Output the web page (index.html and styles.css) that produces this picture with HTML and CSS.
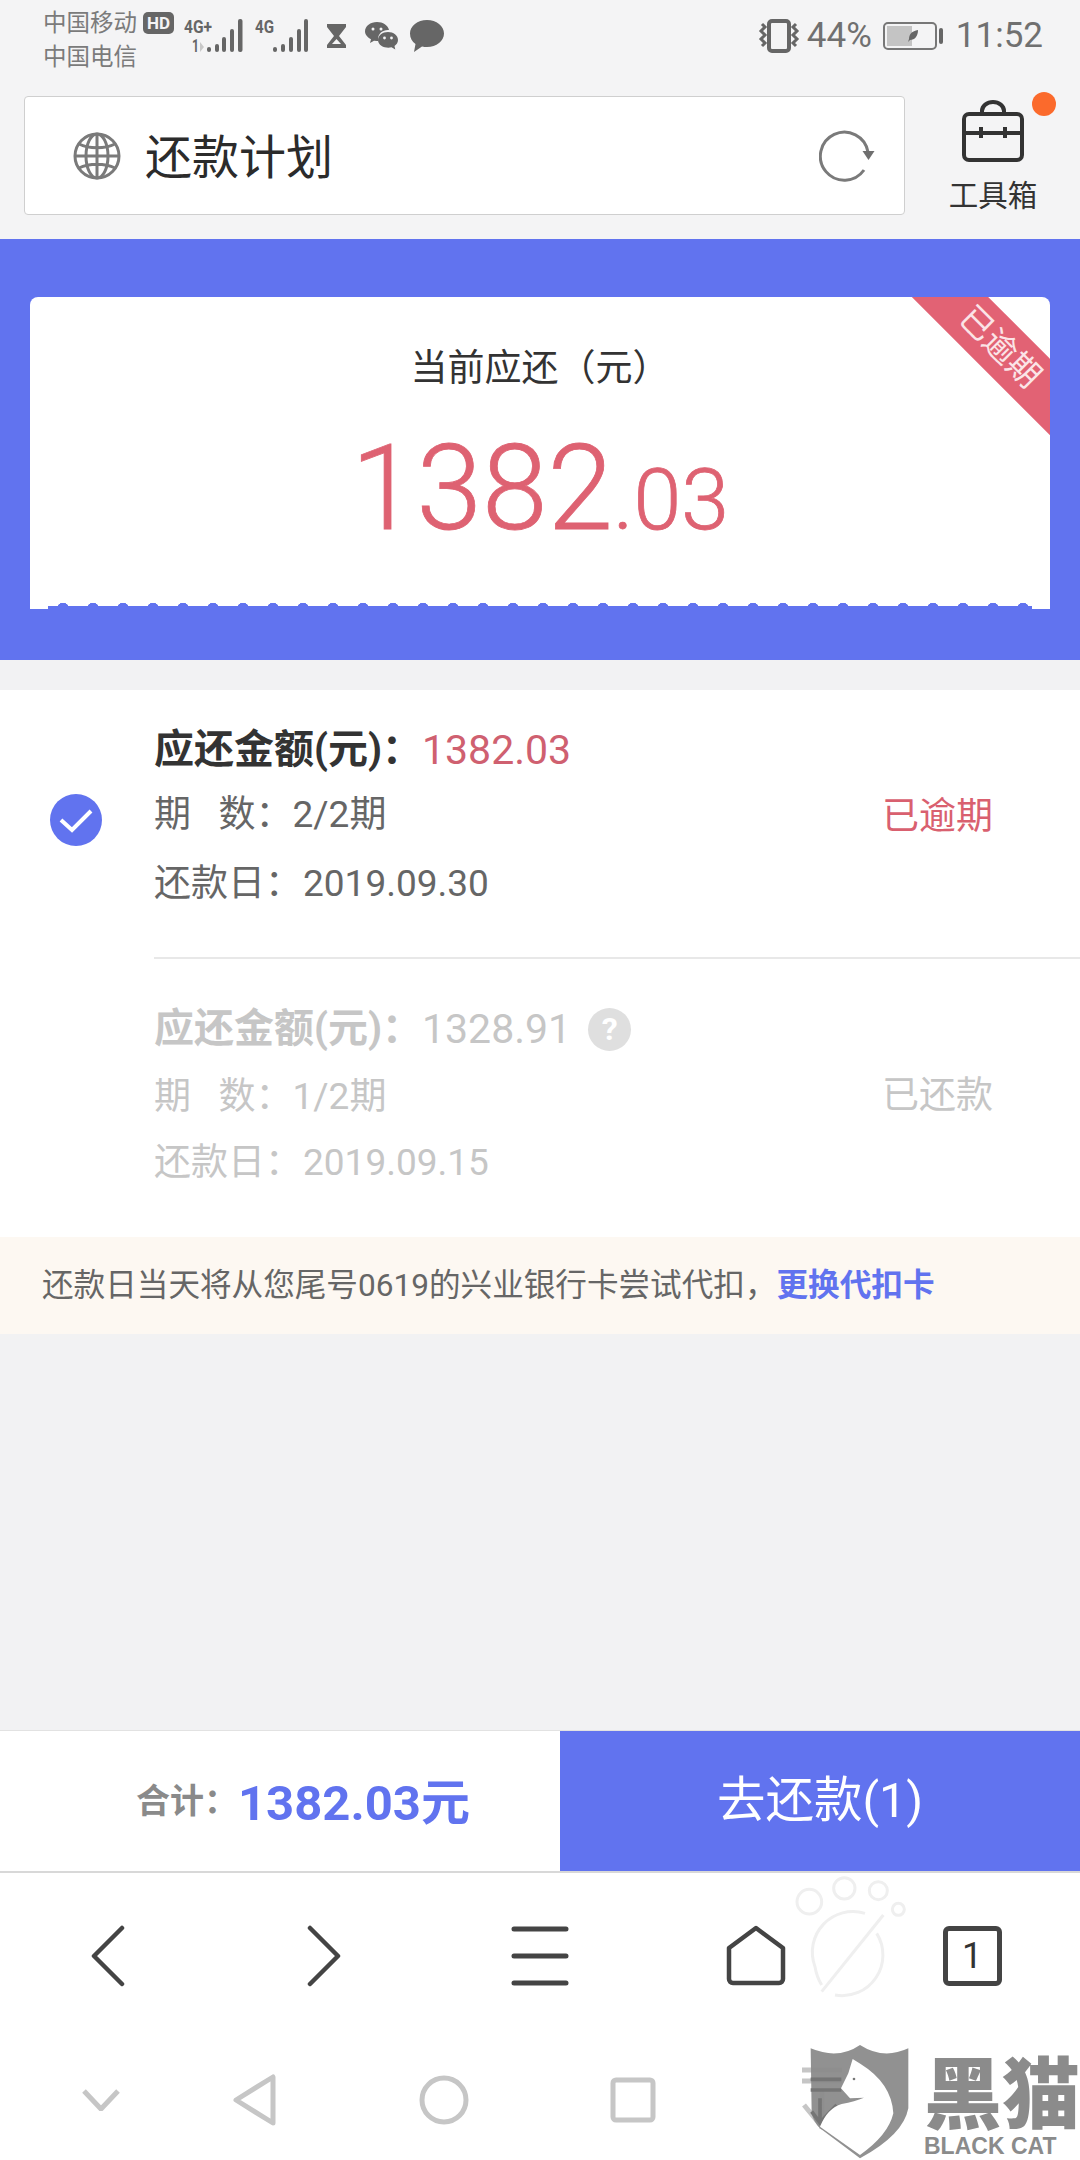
FILE: index.html
```html
<!DOCTYPE html>
<html lang="zh-CN">
<head>
<meta charset="utf-8">
<title>还款计划</title>
<link rel="stylesheet" href="styles.css">
</head>
<body>
<div class="page">
  <header class="status">
    <div class="carrier">
      <div class="carrier-line">中国移动<span class="hd">HD</span></div>
      <div class="carrier-line">中国电信</div>
    </div>
    <svg class="sig1" width="59" height="44" viewBox="0 -4 59 44">
      <text class="net" x="0" y="15" textLength="28" lengthAdjust="spacingAndGlyphs">4G+</text>
      <text class="net" x="8" y="34" textLength="7" lengthAdjust="spacingAndGlyphs">1</text>
      <path class="arrow" d="M16 24l4 5-4 5z"/>
      <g class="bar"><rect x="23" y="29" width="4" height="5" rx="2"/><rect x="31" y="26" width="4" height="8" rx="2"/><rect x="38" y="19" width="4" height="15" rx="2"/><rect x="46" y="11" width="4" height="23" rx="2"/><rect x="54" y="1" width="4.500" height="33" rx="2"/></g>
    </svg>
    <svg class="sig2" width="53" height="44" viewBox="0 -4 53 44">
      <text class="net" x="0" y="15" textLength="19" lengthAdjust="spacingAndGlyphs">4G</text>
      <g class="bar"><rect x="18" y="29" width="4" height="5" rx="2"/><rect x="26" y="26" width="4" height="8" rx="2"/><rect x="34" y="19" width="4" height="15" rx="2"/><rect x="42" y="11" width="4" height="23" rx="2"/><rect x="49" y="1" width="4" height="33" rx="2"/></g>
    </svg>
    <svg class="hourglass" width="19" height="24" viewBox="0 0 19 24">
      <path class="glyph" d="M0 0h19v3l-7 9 7 9v3H0v-3l7-9-7-9z"/><path class="cut" d="M5 20l4.500-5 4.500 5z"/>
    </svg>
    <svg class="wechat" width="33" height="28" viewBox="0 0 33 28">
      <path class="glyph" d="M12 0c6 0 11 3.500 12 8-6-.5-11 3.500-11 9l.2 2H12l-3-.3-4 2.300 1-3.700C2.500 15.500 0 12.500 0 9.500 0 4 5.500 0 12 0z"/>
      <circle class="cut" cx="8" cy="7" r="1.500"/><circle class="cut" cx="16" cy="7" r="1.500"/>
      <path class="glyph" d="M23 10c5.500 0 10 3.500 10 8 0 2.500-1.500 4.700-3.500 6l.8 3.500-3.800-2.200c-5 1.500-13.500-1-13.500-7.300 0-4.500 4.500-8 10-8z"/>
      <circle class="cut" cx="19.500" cy="16" r="1.400"/><circle class="cut" cx="26.500" cy="16" r="1.400"/>
    </svg>
    <svg class="msg" width="34" height="32" viewBox="0 0 34 32">
      <path class="glyph" d="M17 0c9.500 0 17 6 17 13.500S26.500 27 17 27c-2 0-3 0-5-.5L4 32l1.500-8C2 21.500 0 18 0 13.500 0 6 7.500 0 17 0z"/>
    </svg>
    <svg class="vib" width="42" height="34" viewBox="0 0 42 34">
      <rect class="line" x="11" y="2" width="20" height="30" rx="3" stroke-width="4"/>
      <path class="line" stroke-width="3" d="M4 5l3 3-4 4 4 4-4 4 4 4-3 3M38 5l-3 3 4 4-4 4 4 4-4 4 3 3"/>
    </svg>
    <span class="pct">44%</span>
    <svg class="batt" width="60" height="30" viewBox="0 0 60 30">
      <rect class="batt-shell" x="1" y="2" width="52" height="26" rx="4"/>
      <rect class="batt-fill" x="4" y="5" width="25" height="20"/>
      <path class="glyph" d="M36 10c-6 1-9 4-9 9l-1 3 2-2c5 0 8-4 8-10z" transform="translate(-1 -1)"/>
      <rect class="glyph" x="56" y="7" width="4" height="16" rx="2"/>
    </svg>
    <span class="clock">11:52</span>
  </header>

  <div class="topbar">
    <div class="address">
      <svg class="globe" width="48" height="48" viewBox="0 0 48 48">
        <g class="globe-line"><circle cx="24" cy="24" r="22"/><ellipse cx="24" cy="24" rx="11" ry="22"/><path d="M24 2v44M2 24h44M6 12c10 5 26 5 36 0M6 36c10-5 26-5 36 0"/></g>
      </svg>
      <span class="address-text">还款计划</span>
      <svg class="reload" width="56" height="52" viewBox="0 0 56 52">
        <path class="reload-line" d="M45 40A24 24 0 1 1 49 22"/><path class="reload-head" d="M43.500 21h12l-6 9z"/>
      </svg>
    </div>
    <div class="toolbox">
      <div class="toolbox-icon">
        <svg width="62" height="62" viewBox="0 0 62 62">
          <g class="tool-line"><rect x="2" y="14" width="58" height="46" rx="5"/><path d="M2 33h58M20 14V11A11 9 0 0 1 42 11V14M19 27v11M43 27v11"/></g>
        </svg>
        <span class="dot"></span>
      </div>
      <span class="toolbox-label">工具箱</span>
    </div>
  </div>

  <section class="hero">
    <div class="card">
      <div class="card-title">当前应还（元）</div>
      <div class="card-amount">1382<span class="card-cents">.03</span></div>
      <div class="ribbon"><span class="ribbon-text">已逾期</span></div>
      <div class="scallop"></div>
    </div>
  </section>

  <section class="list">
    <article class="item item-first">
      <svg class="check" width="52" height="52" viewBox="0 0 52 52"><circle class="check-bg" cx="26" cy="26" r="26"/><path class="check-mark" d="M11 26l11 10L41 17"/></svg>
      <div class="item-body item-body-first">
        <div class="lines">
          <div class="line-main"><b class="label">应还金额(元)：</b><span class="amt">1382.03</span></div>
          <div class="line-sub line-b">期&nbsp;&nbsp;&nbsp;数：2/2期</div>
          <div class="line-sub line-c">还款日：<span class="date">2019.09.30</span></div>
        </div>
        <span class="state state-late">已逾期</span>
      </div>
    </article>
    <article class="item item-second">
      <div class="item-body item-body-second">
        <div class="lines">
          <div class="line-main"><b class="label">应还金额(元)：</b><span class="amt">1328.91</span><span class="help">?</span></div>
          <div class="line-sub line-d">期&nbsp;&nbsp;&nbsp;数：1/2期</div>
          <div class="line-sub line-e">还款日：<span class="date">2019.09.15</span></div>
        </div>
        <span class="state state-paid">已还款</span>
      </div>
    </article>
  </section>

  <div class="notice">还款日当天将从您尾号0619的兴业银行卡尝试代扣，<b class="notice-link">更换代扣卡</b></div>

  <div class="filler"></div>

  <footer class="paybar">
    <div class="total"><b class="total-label">合计：</b><b class="total-value">1382.03元</b></div>
    <div class="pay-btn">去还款(1)</div>
  </footer>

  <nav class="browser-nav">
    <svg width="34" height="62" viewBox="0 0 34 62"><path class="nav-line" d="M31 3L3 31l28 28"/></svg>
    <svg width="34" height="62" viewBox="0 0 34 62"><path class="nav-line" d="M3 3l28 28L3 59"/></svg>
    <svg width="58" height="62" viewBox="0 0 58 62"><path class="nav-line nav-bars" d="M3 4h52M3 31h52M3 58h52"/></svg>
    <svg width="60" height="62" viewBox="0 0 60 62"><path class="nav-line" d="M30 3L57 23V54a4 4 0 0 1-4 4H7a4 4 0 0 1-4-4V23z"/></svg>
    <div class="tab-count">1</div>
  </nav>

  <nav class="sys-nav">
    <svg class="sys-first" width="38" height="22" viewBox="0 0 38 22"><path class="sys-line" d="M2 2l17 18L36 2"/></svg>
    <svg width="44" height="52" viewBox="0 0 44 52"><path class="sys-line" d="M40 3v46L3 26z"/></svg>
    <svg width="50" height="50" viewBox="0 0 50 50"><circle class="sys-line" cx="25" cy="25" r="22"/></svg>
    <svg width="46" height="46" viewBox="0 0 46 46"><rect class="sys-line" x="3" y="3" width="40" height="40" rx="3"/></svg>
    <svg width="42" height="66" viewBox="0 0 42 66"><path class="sys-line" d="M1 3h40M1 14h40M21 22v40M3 38l18 22 18-22"/></svg>
  </nav>

  <div class="watermark">
    <svg class="mark-art" width="340" height="300" viewBox="0 0 1020 900">
      <g class="paw">
        <circle cx="208" cy="125" r="37"/><circle cx="313" cy="85" r="32"/><circle cx="415" cy="92" r="27"/><circle cx="475" cy="148" r="18"/>
        <path d="M375 160A122 122 0 0 0 225 320Q230 350 245 375M410 220A122 122 0 0 1 285 405M430 165L245 395"/>
      </g>
      <path class="shield" d="M212 565Q295 600 360 555Q430 600 505 565V745Q490 825 360 895L240 805Q220 785 215 760Z"/>
      <path class="shield-under" d="M212 658H304M212 690H304M240 715V785M215 755L240 788L290 735"/>
      <path class="cat" d="M338 597L362 612Q455 670 460 760Q445 825 360 885L240 800Q262 745 305 732Q345 724 372 713L330 715L303 685L325 640Z"/>
      <circle class="cat-eye" cx="342" cy="657" r="4"/>
    </svg>
    <div class="mark-text">
      <span class="mark-cn">黑猫</span>
      <span class="mark-en">BLACK CAT</span>
    </div>
  </div>
</div>
</body>
</html>
```

FILE: styles.css
```css
* { box-sizing: border-box; }
html, body { margin: 0; padding: 0; }
body {
  width: 1080px;
  height: 2160px;
  overflow: hidden;
  background: #fff;
  font-family: Roboto, "Noto Sans CJK SC", "Noto Sans", sans-serif;
  color: #333;
}
b { font-weight: 700; }
svg { display: block; flex: none; }

.page { position: relative; display: flex; flex-direction: column; width: 1080px; height: 2160px; background: #f2f2f3; }

/* status bar */
.status { display: flex; align-items: center; height: 96px; padding: 0 37px 24px 43px; background: #f4f4f5; color: #707070; }
.carrier { width: 132px; margin-top: 8px; font-size: 23.500px; line-height: 34px; color: #7b7b7b; }
.carrier-line { display: flex; align-items: center; height: 34px; white-space: nowrap; }
.hd { display: inline-block; width: 31px; height: 22px; margin-left: 6px; border-radius: 5px; background: #666; color: #f4f4f5; font-size: 17px; font-weight: 700; line-height: 22px; text-align: center; }
.sig1 { margin-left: 9px; }
.sig2 { margin-left: 12px; }
.hourglass { margin-left: 19px; }
.wechat { margin-left: 19px; }
.msg { margin-left: 12px; }
.vib { margin-left: auto; }
.net { font-family: Roboto, sans-serif; font-size: 18.500px; font-weight: 700; fill: #666; }
.arrow { fill: #c8c8c8; }
.bar rect, .glyph { fill: #666; }
.cut { fill: #f4f4f5; }
.line { fill: none; stroke: #666; }
.pct { margin-left: 7px; font-size: 35px; line-height: 40px; }
.batt { margin-left: 11px; }
.batt-shell { fill: none; stroke: #777; stroke-width: 2; }
.batt-fill { fill: #c4c4c4; }
.clock { margin-left: 13px; font-size: 35px; line-height: 40px; }

/* address row */
.topbar { display: flex; height: 143px; padding-left: 24px; background: #f4f4f5; }
.address { display: flex; align-items: center; width: 881px; height: 119px; padding: 0 29px 0 48px; border: 1px solid #cfcfcf; border-radius: 4px; background: #fff; }
.address-text { margin: 5px 0 0 24px; font-size: 47px; line-height: 60px; color: #2b2b2b; }
.reload { margin-left: auto; }
.globe-line { fill: none; stroke: #7a7a7a; stroke-width: 3; }
.reload-line { fill: none; stroke: #7a7a7a; stroke-width: 3; }
.reload-head { fill: #6f6f6f; }
.toolbox { display: flex; flex-direction: column; align-items: center; width: 88px; margin-left: 44px; padding-top: 4px; }
.toolbox-icon { position: relative; width: 62px; height: 62px; }
.tool-line { fill: none; stroke: #333; stroke-width: 4; stroke-linejoin: round; }
.dot { position: absolute; top: -8px; left: 70px; width: 24px; height: 24px; border-radius: 50%; background: #fb6a2c; }
.toolbox-label { margin-top: 16px; font-size: 29.500px; line-height: 36px; color: #333; white-space: nowrap; }

/* hero */
.hero { height: 421px; padding: 58px 30px 0; background: #6173ef; }
.card { position: relative; height: 312px; padding-top: 47px; overflow: hidden; border-radius: 8px 8px 0 0; background: #fff; text-align: center; }
.card-title { font-size: 37px; line-height: 50px; color: #333; }
.card-amount { margin-top: 30px; font-size: 118px; font-weight: 300; line-height: 130px; color: #de6272; -webkit-text-stroke: .8px #de6272; }
.card-cents { font-size: 86px; }
.ribbon { position: absolute; top: 23px; right: -50px; display: flex; justify-content: center; align-items: center; width: 200px; height: 54px; background: #e26274; transform: rotate(45deg); }
.ribbon-text { font-size: 33px; line-height: 40px; color: #fbe4e7; }
.scallop { position: absolute; left: 18px; right: 18px; bottom: 0; height: 6px; background: radial-gradient(circle at 15px 6px, #6173ef 6px, transparent 6.500px) 0 0 / 30px 6px repeat-x; border-bottom: 3px solid #6173ef; }

/* list */
.list { margin-top: 30px; background: #fff; }
.item { position: relative; display: flex; }
.item-first { height: 269px; }
.item-second { height: 278px; }
.check { position: absolute; top: 104px; left: 50px; }
.check-bg { fill: #6173ef; }
.check-mark { fill: none; stroke: #fff; stroke-width: 4; }
.item-body { display: flex; justify-content: space-between; align-items: center; width: 100%; margin-left: 154px; padding-right: 87px; }
.item-body-first { padding-top: 36px; padding-bottom: 50px; border-bottom: 2px solid #e8e8e8; }
.item-body-second { padding-top: 46px; padding-bottom: 50px; color: #c6c6c6; }
.lines { display: flex; flex-direction: column; }
.line-main { display: flex; align-items: center; height: 48px; font-size: 40px; line-height: 48px; white-space: nowrap; }
.label { color: #333; }
.item-body-second .label { color: #c6c6c6; }
.amt { font-size: 41px; color: #cf6070; }
.item-body-second .amt { color: #c6c6c6; }
.help { display: inline-block; width: 43px; height: 43px; margin-left: 17px; border-radius: 50%; background: #dfdfdf; color: #fff; font-size: 32px; font-weight: 700; line-height: 43px; text-align: center; }
.line-sub { height: 48px; font-size: 37px; line-height: 48px; color: #666; white-space: nowrap; }
.item-body-second .line-sub { color: #c6c6c6; }
.line-b { margin-top: 17px; }
.line-c { margin-top: 21px; }
.line-d { margin-top: 20px; }
.line-e { margin-top: 18px; }
.date { margin-left: 1px; }
.state { font-size: 37px; line-height: 48px; white-space: nowrap; }
.state-late { color: #d9606f; }
.state-paid { color: #c6c6c6; }

/* notice */
.notice { height: 97px; padding-left: 42px; background: #fdf8f2; font-size: 31.600px; line-height: 97px; color: #666; white-space: nowrap; }
.notice-link { color: #6173ef; }
.filler { flex: 1; background: #f2f2f3; }

/* pay bar */
.paybar { display: flex; height: 143px; border-top: 1px solid #e2e2e2; border-bottom: 2px solid #d8d8d8; background: #fff; }
.total { display: flex; align-items: center; width: 560px; padding: 0 0 6px 136px; white-space: nowrap; }
.total-label { font-size: 34px; color: #8a8a8a; }
.total-value { font-size: 49px; color: #6173ef; }
.pay-btn { flex: 1; background: #6173ef; color: #fff; font-size: 48.500px; line-height: 140px; text-align: center; }

/* browser nav */
.browser-nav { display: grid; grid-template-columns: repeat(5, 216px); justify-items: center; align-items: center; height: 166px; background: #fff; }
.nav-line { fill: none; stroke: #444; stroke-width: 4.500; stroke-linecap: round; stroke-linejoin: round; }
.nav-bars { stroke-width: 5; }
.tab-count { width: 59px; height: 60px; border: 5px solid #444; border-radius: 6px; color: #333; font-size: 36px; line-height: 50px; text-align: center; }

.sys-nav { display: grid; grid-template-columns: 160px repeat(4, 189px); justify-items: center; align-items: center; height: 121px; background: #fff; }
.sys-first { margin-left: 42px; }
.sys-line { fill: none; stroke: #c6c6c6; stroke-width: 5; stroke-linejoin: round; }

/* watermark */
.watermark { position: absolute; right: 0; bottom: 0; width: 340px; height: 300px; }
.mark-art { position: absolute; left: 0; top: 0; }
.paw { fill: none; stroke: #efefef; stroke-width: 9; }
.shield { fill: #8b8b8b; fill-opacity: .95; }
.shield-under { fill: none; stroke: #757575; stroke-width: 11; }
.cat { fill: #fff; }
.cat-eye { fill: #777; }
.mark-text { position: absolute; left: 184px; top: 190px; display: flex; flex-direction: column; }
.mark-cn { font-family: "Noto Sans CJK SC", sans-serif; font-size: 78px; font-weight: 900; line-height: 78px; color: #8b8b8b; white-space: nowrap; }
.mark-en { margin-top: 6px; font-family: "Liberation Sans", sans-serif; font-size: 23px; font-weight: 700; line-height: 24px; color: #8b8b8b; white-space: nowrap; }
```
